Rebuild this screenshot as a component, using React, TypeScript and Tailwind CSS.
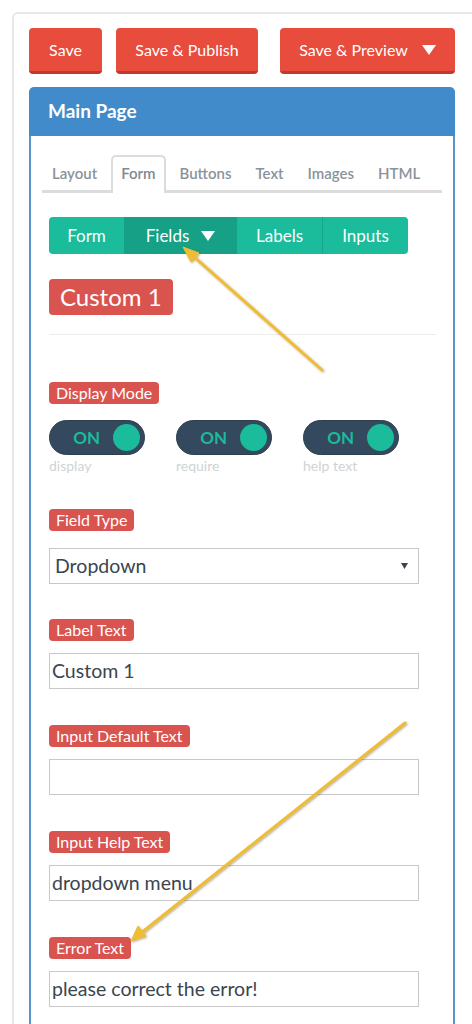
import React from "react";

const FONT = { fontFamily: "Lato, 'Open Sans', 'Liberation Sans', sans-serif" };

function Badge({ children }: { children: React.ReactNode }) {
  return (
    <div className="flex h-[22px] w-fit items-center rounded-[4px] bg-[#d9534f] px-[7px] text-[16px] leading-none text-white">
      {children}
    </div>
  );
}

function TextBox({ value }: { value: string }) {
  return (
    <div className="flex h-[36px] w-[370px] items-center border border-[#c8c8c8] bg-white pl-[2px] text-[19.5px] text-[#3a4550]">
      {value}
    </div>
  );
}

function Toggle({ caption }: { caption: string }) {
  return (
    <div className="flex w-[127px] flex-col">
      <div className="flex h-[35px] w-[96px] items-center justify-end rounded-full border border-[#2c3e50] bg-[#34495e] pr-[4px]">
        <span className="mr-[13px] text-[17px] font-bold text-[#1abc9c]">ON</span>
        <span className="h-[27px] w-[27px] rounded-full bg-[#1abc9c]" />
      </div>
      <span className="mt-[3px] text-[14px] leading-[16px] text-[#cfd3d6]">{caption}</span>
    </div>
  );
}

const tabs = ["Layout", "Form", "Buttons", "Text", "Images", "HTML"];

export default function App() {
  return (
    <div className="relative h-[1024px] w-[472px] overflow-hidden bg-white" style={FONT}>
      <div className="ml-3 mt-3 w-[480px] rounded-tl-[6px] border-l-2 border-t-2 border-[#e8e8e8] pl-[15px] pt-[14px]">
        {/* top buttons */}
        <div className="flex">
          <button className="h-[46px] w-[73px] rounded-[4px] border-b-[3px] border-[#c0392b] bg-[#e74c3c] text-[16px] text-white">
            Save
          </button>
          <button className="ml-[14px] h-[46px] w-[142px] rounded-[4px] border-b-[3px] border-[#c0392b] bg-[#e74c3c] text-[16px] text-white">
            Save &amp; Publish
          </button>
          <button className="ml-[22px] flex h-[46px] w-[175px] items-center justify-center gap-[14px] rounded-[4px] border-b-[3px] border-[#c0392b] bg-[#e74c3c] text-[16px] text-white">
            Save &amp; Preview
            <svg width="14" height="10" viewBox="0 0 14 10">
              <path d="M0 0h14L7 10z" fill="#fff" />
            </svg>
          </button>
        </div>

        {/* main panel */}
        <div className="mt-[13px] w-[426px]">
          <div className="flex h-[49px] items-center rounded-t-[5px] bg-[#428bca] pl-[19px] text-[19px] font-bold text-white">
            Main Page
          </div>
          <div className="h-[900px] border-x-2 border-[#5b93cc] px-[18px] pt-[19px]">
            {/* tabs */}
            <div className="-mx-[7px] flex border-b-[3px] border-[#dcdcdc]">
              {tabs.map((t) => (
                <div
                  key={t}
                  className={
                    t === "Form"
                      ? "-mb-[3px] mr-[4px] rounded-t-[5px] border-2 border-b-0 border-[#dcdcdc] bg-white px-[8px] pb-[11px] pt-[7px] text-[15px] font-semibold leading-[18px] text-[#7f8a93]"
                      : "mr-[4px] px-[10px] pb-[8px] pt-[9px] text-[15px] font-semibold leading-[18px] text-[#8a939b]"
                  }
                >
                  {t}
                </div>
              ))}
            </div>

            {/* segmented buttons */}
            <div className="mt-[24px] flex h-[37px] w-[359px] overflow-hidden rounded-[4px] text-[17px] text-white">
              <div className="flex w-[75px] items-center justify-center bg-[#1abc9c]">Form</div>
              <div className="flex w-[113px] items-center justify-center gap-[12px] bg-[#16a085]">
                Fields
                <svg width="14" height="10" viewBox="0 0 14 10">
                  <path d="M0 0h14L7 10z" fill="#fff" />
                </svg>
              </div>
              <div className="flex w-[85px] items-center justify-center bg-[#1abc9c]">Labels</div>
              <div className="flex w-[86px] items-center justify-center border-l border-[#17a689] bg-[#1abc9c]">Inputs</div>
            </div>

            <div className="mt-[25px] flex h-[36px] w-fit items-center rounded-[4px] bg-[#d9534f] px-[11px] text-[24px] text-white">
              Custom 1
            </div>

            <div className="mt-[19px] h-px w-[387px] bg-[#ececec]" />

            <div className="mt-[47px]">
              <Badge>Display Mode</Badge>
            </div>
            <div className="mt-[16px] flex">
              <Toggle caption="display" />
              <Toggle caption="require" />
              <Toggle caption="help text" />
            </div>

            <div className="mt-[35px]">
              <Badge>Field Type</Badge>
            </div>
            <div className="mt-[17px] flex h-[36px] w-[370px] items-center justify-between border border-[#c8c8c8] bg-white pl-[5px] pr-[10px] text-[19.5px] text-[#3a4550]">
              Dropdown
              <svg width="7" height="6" viewBox="0 0 7 6">
                <path d="M0 0h7L3.5 6z" fill="#3a4550" />
              </svg>
            </div>

            <div className="mt-[35px]">
              <Badge>Label Text</Badge>
            </div>
            <div className="mt-[12px]">
              <TextBox value="Custom 1" />
            </div>

            <div className="mt-[36px]">
              <Badge>Input Default Text</Badge>
            </div>
            <div className="mt-[12px]">
              <TextBox value="" />
            </div>

            <div className="mt-[36px]">
              <Badge>Input Help Text</Badge>
            </div>
            <div className="mt-[12px]">
              <TextBox value="dropdown menu" />
            </div>

            <div className="mt-[36px]">
              <Badge>Error Text</Badge>
            </div>
            <div className="mt-[12px]">
              <TextBox value="please correct the error!" />
            </div>
          </div>
        </div>
      </div>

      {/* annotation arrows */}
      <svg className="pointer-events-none absolute left-0 top-0" width="472" height="1024" viewBox="0 0 472 1024">
        <defs>
          <filter id="sh" x="-10%" y="-10%" width="120%" height="120%">
            <feDropShadow dx="1" dy="1" stdDeviation="0.8" floodColor="#6b5a2a" floodOpacity="0.5" />
          </filter>
        </defs>
        <g filter="url(#sh)" fill="#efbc35" stroke="#efbc35">
          <line x1="322" y1="370" x2="192" y2="255" strokeWidth="3" strokeLinecap="round" />
          <path d="M183 247 L199 253 L191 262 Z" strokeWidth="1" />
          <line x1="405" y1="723" x2="141" y2="933" strokeWidth="3" strokeLinecap="round" />
          <path d="M131 941 L138 926 L146 936 Z" strokeWidth="1" />
        </g>
      </svg>
    </div>
  );
}
